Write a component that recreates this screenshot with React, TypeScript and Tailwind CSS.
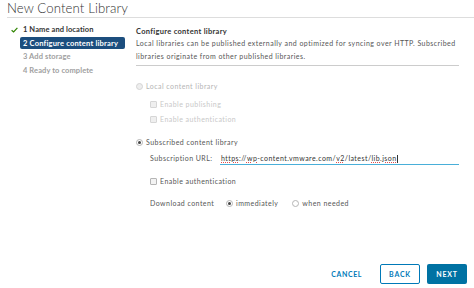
import React from 'react';

const font = { fontFamily: 'Lato, "Open Sans", sans-serif' };

const Radio: React.FC<{ checked?: boolean; disabled?: boolean }> = ({ checked, disabled }) => (
  <span
    className={`inline-flex items-center justify-center w-[7px] h-[7px] rounded-full border ${
      disabled ? 'border-[#d4d4d4] bg-[#eeeeee]' : 'border-[#b5b5b5] bg-white'
    }`}
  >
    {checked && <span className="w-[3px] h-[3px] rounded-full bg-[#444]" />}
  </span>
);

const Checkbox: React.FC<{ disabled?: boolean }> = ({ disabled }) => (
  <span
    className={`inline-block w-[7px] h-[7px] rounded-[1px] border ${
      disabled ? 'border-[#d6d6d6] bg-[#efefef]' : 'border-[#b5b5b5] bg-[#f3f3f3]'
    }`}
  />
);

const steps = [
  { label: '1 Name and location', state: 'done' },
  { label: '2 Configure content library', state: 'active' },
  { label: '3 Add storage', state: 'todo' },
  { label: '4 Ready to complete', state: 'todo' },
];

const App: React.FC = () => {
  return (
    <div className="w-[474px] h-[288px] bg-white flex flex-col overflow-hidden text-[#565656]" style={font}>
      <div className="ml-[7px] h-[18px] border-b border-[#dddddd] flex items-end">
        <h1 className="text-[13.2px] leading-[18px] font-light text-[#333] tracking-[0.1px]">New Content Library</h1>
      </div>

      <div className="flex flex-1">
        {/* steps */}
        <nav className="w-[136px] pt-[5px] flex flex-col">
          {steps.map((s) => (
            <div key={s.label} className="h-[13.5px] flex items-center">
              <span className="w-[20px] flex justify-end pr-[2px]">
                {s.state === 'done' && (
                  <svg width="7" height="6" viewBox="0 0 7 6">
                    <path d="M0.6 3.2 L2.6 5 L6.4 0.8" fill="none" stroke="#2f8400" strokeWidth="1.2" />
                  </svg>
                )}
              </span>
              {s.state === 'active' ? (
                <span className="w-[105px] h-[12px] rounded-[2px] bg-[#1c4e7e] text-white text-[7.5px] font-bold tracking-[0.2px] pl-[3px] flex items-center">
                  {s.label}
                </span>
              ) : (
                <span
                  className={`pl-[3px] text-[7.5px] font-bold tracking-[0.1px] ${s.state === 'done' ? 'text-[#333]' : 'text-[#a0a0a0]'}`}
                >
                  {s.label}
                </span>
              )}
            </div>
          ))}
        </nav>

        {/* content */}
        <div className="w-[323px] flex flex-col text-[7px] tracking-[0.45px]">
          <div className="pt-[9px] text-[7.5px] font-bold text-[#333] leading-[10px] tracking-[0.3px]">Configure content library</div>
          <p className="leading-[13px]">
            Local libraries can be published externally and optimized for syncing over HTTP. Subscribed libraries
            originate from other published libraries.
          </p>
          <div className="mt-[2px] border-b border-[#cccccc]" />

          <div className="mt-[15px] flex items-center gap-[3px] text-[#b5b5b5] h-[10px]">
            <Radio disabled />
            <span>Local content library</span>
          </div>
          <div className="mt-[8px] ml-[14px] flex items-center gap-[3px] text-[#c8c8c8] h-[10px]">
            <Checkbox disabled />
            <span>Enable publishing</span>
          </div>
          <div className="mt-[5px] ml-[14px] flex items-center gap-[3px] text-[#c8c8c8] h-[10px]">
            <Checkbox disabled />
            <span>Enable authentication</span>
          </div>

          <div className="mt-[13px] flex items-center gap-[3px] h-[10px]">
            <Radio checked />
            <span>Subscribed content library</span>
          </div>
          <div className="mt-[6px] ml-[14px] flex items-end h-[12px]">
            <span className="w-[70px] pb-[2px]">Subscription URL:</span>
            <span className="flex-1 border-b-[1.5px] border-[#49afd9] text-[#333] pb-[1px] pl-[1px]">
              <span className="underline decoration-dotted decoration-[#e05050]">https</span>://
              <span className="underline decoration-dotted decoration-[#e05050]">wp</span>-content.vmware.com/
              <span className="underline decoration-dotted decoration-[#e05050]">v2</span>/latest/
              <span className="underline decoration-dotted decoration-[#e05050]">lib.json</span>
              <span className="inline-block w-[1px] h-[8px] bg-[#333] align-middle" />
            </span>
          </div>
          <div className="mt-[11px] ml-[14px] flex items-center gap-[3px] h-[10px]">
            <Checkbox />
            <span>Enable authentication</span>
          </div>
          <div className="mt-[12px] ml-[14px] flex items-center h-[10px]">
            <span className="w-[76px]">Download content</span>
            <span className="flex items-center gap-[3px]">
              <Radio checked />
              <span>immediately</span>
            </span>
            <span className="ml-[14px] flex items-center gap-[3px]">
              <Radio />
              <span>when needed</span>
            </span>
          </div>
        </div>
      </div>

      <div className="h-[38px] flex items-start justify-end pr-[7px] pt-[14px]">
        <button className="h-[20px] text-[7px] font-bold tracking-[0.6px] text-[#0079b8] mr-[18px]">CANCEL</button>
        <button className="h-[20px] w-[40px] rounded-[2px] border border-[#0079b8] text-[7px] font-bold tracking-[0.8px] text-[#0079b8] mr-[7px]">
          BACK
        </button>
        <button className="h-[20px] w-[40px] rounded-[2px] bg-[#0072a3] text-[7px] font-bold tracking-[0.8px] text-white">
          NEXT
        </button>
      </div>
    </div>
  );
};

export default App;
